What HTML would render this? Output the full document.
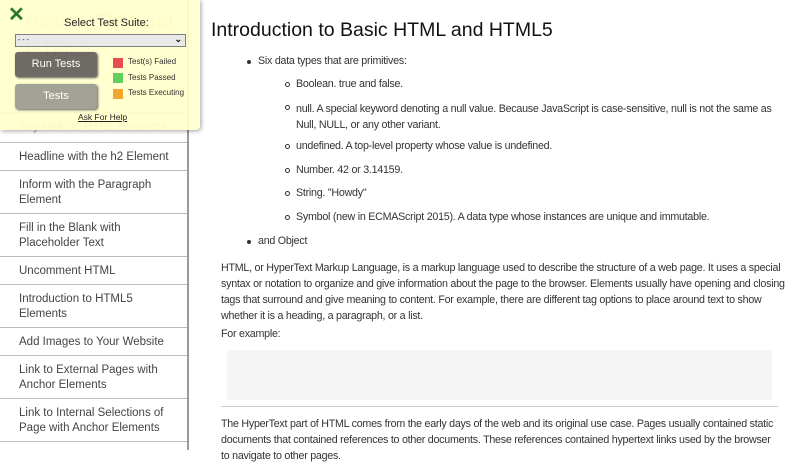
<!DOCTYPE html>
<html><head><style>
body{margin:0;width:800px;height:450px;overflow:hidden;font-family:"Liberation Sans",sans-serif;background:#fff;position:relative}
#side{position:absolute;left:0;top:0;width:187px;height:450px;border-right:2px solid #999;background:#fff}
#side .t{position:absolute;left:26px;top:8px;font-size:20px;color:#ccc;line-height:28px;width:160px}
.it{position:absolute;left:0;width:187px;border-top:1px solid #bbb;font-size:11.5px;color:#444;line-height:15px;padding:7px 22px 0 19px;box-sizing:border-box}
.n{white-space:nowrap}
#main{position:absolute;left:211px;top:0;width:570px;color:#333;font-size:10.7px;letter-spacing:-0.25px}
h1{font-size:19.5px;font-weight:normal;margin:19px 0 0;color:#111;letter-spacing:0}
ul{margin:0;padding:0}
li{position:absolute;list-style:none}
.b::before{content:"";position:absolute;left:-11px;top:5px;width:4px;height:4px;border-radius:50%;background:#333}
.c::before{content:"";position:absolute;left:-11px;top:4px;width:3px;height:3px;border-radius:50%;border:1px solid #333}
p{position:absolute;margin:0;line-height:16px;left:10px;width:558px}
#pan{position:absolute;left:0;top:0;width:200px;height:130px;background:#ffffcc;opacity:.93;box-shadow:1px 1px 5px rgba(0,0,0,.4);border-radius:0 0 4px 0}
.btn{position:absolute;left:15px;width:82px;height:25px;border-radius:3px;color:#fff;font-size:11px;text-align:center;line-height:25px;box-shadow:1px 1px 2px #555}
.sq{position:absolute;left:113px;width:10px;height:10px}
.lg{position:absolute;left:128px;font-size:8px;color:#222}
</style></head><body>
<div id="side">
<div class="t">Basic HTML and HTML5</div>
<div class="it n" style="top:112px;height:30px;color:#999">Say Hello to HTML Elements</div>
<div class="it n" style="top:142px;height:28px">Headline with the h2 Element</div>
<div class="it" style="top:170px;height:43px">Inform with the Paragraph Element</div>
<div class="it" style="top:213px;height:43px">Fill in the Blank with Placeholder Text</div>
<div class="it n" style="top:256px;height:28px">Uncomment HTML</div>
<div class="it" style="top:284px;height:43px">Introduction to HTML5 Elements</div>
<div class="it n" style="top:327px;height:28px">Add Images to Your Website</div>
<div class="it" style="top:355px;height:43px">Link to External Pages with Anchor Elements</div>
<div class="it" style="top:398px;height:43px">Link to Internal Selections of Page with Anchor Elements</div>
<div class="it" style="top:441px;height:20px"></div>
</div>
<div id="pan">
<div style="position:absolute;left:8px;top:2px;font-size:20px;font-weight:bold;color:#1a6e1a">✕</div>
<div style="position:absolute;left:64px;top:17px;font-size:11px;color:#111">Select Test Suite:</div>
<div style="position:absolute;left:15px;top:34px;width:167px;height:11px;background:#e8e8e8;border:1px solid #777;font-size:7px;line-height:11px;padding-left:2px">- - -<span style="position:absolute;right:3px;top:-1px;font-size:9px;font-weight:bold">⌄</span></div>
<div class="btn" style="top:52px;background:#636058">Run Tests</div>
<div class="btn" style="top:84px;background:#9d9b90">Tests</div>
<div class="sq" style="top:58px;background:#e84040"></div><div class="lg" style="top:57px">Test(s) Failed</div>
<div class="sq" style="top:73px;background:#55cc55"></div><div class="lg" style="top:73px">Tests Passed</div>
<div class="sq" style="top:89px;background:#f0a020"></div><div class="lg" style="top:88px">Tests Executing</div>
<div style="position:absolute;left:78px;top:112px;font-size:8.5px;text-decoration:underline;color:#111">Ask For Help</div>
</div>
<div id="main">
<h1>Introduction to Basic HTML and HTML5</h1>
<ul>
<li class="b" style="left:47px;top:55px">Six data types that are primitives:</li>
<li class="c" style="left:85px;top:78px">Boolean. true and false.</li>
<li class="c" style="left:85px;top:101px;width:480px;line-height:16px">null. A special keyword denoting a null value. Because JavaScript is case-sensitive, null is not the same as Null, NULL, or any other variant.</li>
<li class="c" style="left:85px;top:140px">undefined. A top-level property whose value is undefined.</li>
<li class="c" style="left:85px;top:164px">Number. 42 or 3.14159.</li>
<li class="c" style="left:85px;top:187px">String. "Howdy"</li>
<li class="c" style="left:85px;top:211px">Symbol (new in ECMAScript 2015). A data type whose instances are unique and immutable.</li>
<li class="b" style="left:47px;top:235px">and Object</li>
</ul>
<p style="top:260px;width:566px">HTML, or HyperText Markup Language, is a markup language used to describe the structure of a web page. It uses a special syntax or notation to organize and give information about the page to the browser. Elements usually have opening and closing tags that surround and give meaning to content. For example, there are different tag options to place around text to show whether it is a heading, a paragraph, or a list.</p>
<p style="top:326px">For example:</p>
<div style="position:absolute;left:16px;top:350px;width:545px;height:50px;background:#f5f5f5"></div>
<div style="position:absolute;left:10px;top:406px;width:557px;border-top:1px solid #ccc"></div>
<p style="top:416px">The HyperText part of HTML comes from the early days of the web and its original use case. Pages usually contained static documents that contained references to other documents. These references contained hypertext links used by the browser to navigate to other pages.</p>
</div>
</body></html>
